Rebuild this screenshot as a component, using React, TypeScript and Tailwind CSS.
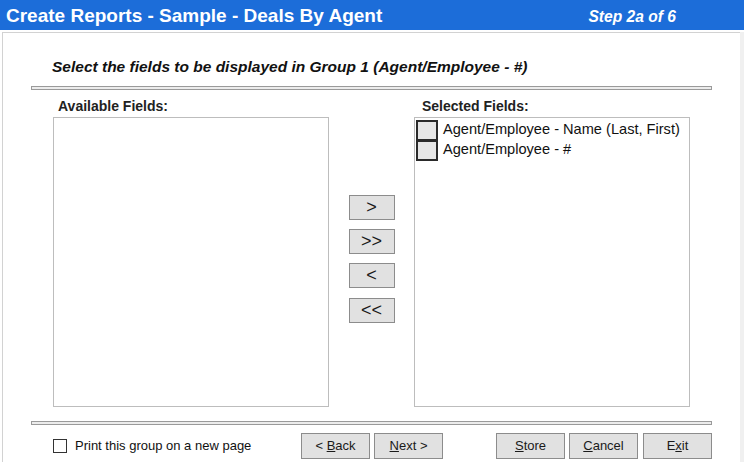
import React from "react";

const font = { fontFamily: '"Liberation Sans", Arial, sans-serif' };

function Btn({ children, className = "" }: { children: React.ReactNode; className?: string }) {
  return (
    <button
      className={`flex items-center justify-center border border-[#8c8c8c] bg-[#e1e1e1] text-[13px] text-[#1a1a1a] ${className}`}
    >
      {children}
    </button>
  );
}

function FieldRow({ label }: { label: string }) {
  return (
    <div className="flex h-[20px] items-center">
      <span className="h-[21px] w-[22px] shrink-0 border-2 border-[#2a2a2a] bg-[#e6e6e6] -mb-[1px]" />
      <span className="ml-[5px] text-[14.6px] text-[#111]">{label}</span>
    </div>
  );
}

export default function App() {
  return (
    <div className="flex h-[462px] w-[744px] flex-col overflow-hidden bg-white" style={font}>
      <div className="flex h-[30px] shrink-0 items-center justify-between bg-[#1c6dd9] pl-[6px] pr-[68px] pt-[3px] text-white">
        <span className="text-[19px] font-bold">Create Reports - Sample - Deals By Agent</span>
        <span className="text-[15.6px] font-bold italic">Step 2a of 6</span>
      </div>
      <div className="flex flex-1 pt-[2px]">
        <div className="ml-[2px] w-[738px] border-l border-t border-[#d2d2d2] bg-white">
          <div className="ml-[49px] mt-[24px] text-[15.5px] font-bold italic leading-[20px] text-[#111]">
            Select the fields to be displayed in Group 1 (Agent/Employee - #)
          </div>
          <div className="ml-[28px] mt-[9px] h-[4px] w-[681px] border border-[#9a9a9a] bg-[#ececec]" />
          <div className="ml-[50px] mt-[8px] flex">
            <div className="w-[276px]">
              <div className="pl-[5px] text-[14px] font-bold leading-[16px] text-[#222]">Available Fields:</div>
              <div className="mt-[3px] h-[290px] border border-[#bdbdbd] bg-white" />
            </div>
            <div className="flex w-[85px] flex-col items-center pt-[97px]">
              <div className="flex flex-col gap-[9px]">
                <Btn className="h-[25px] w-[46px] text-[18px]">&gt;</Btn>
                <Btn className="h-[25px] w-[46px] text-[18px]">&gt;&gt;</Btn>
                <Btn className="h-[25px] w-[46px] text-[18px]">&lt;</Btn>
                <Btn className="mt-[1px] h-[25px] w-[46px] text-[18px]">&lt;&lt;</Btn>
              </div>
            </div>
            <div className="w-[276px]">
              <div className="pl-[8px] text-[14px] font-bold leading-[16px] text-[#222]">Selected Fields:</div>
              <div className="mt-[3px] h-[290px] border border-[#bdbdbd] bg-white pl-[1px] pt-[2px]">
                <FieldRow label="Agent/Employee - Name (Last, First)" />
                <FieldRow label="Agent/Employee - #" />
              </div>
            </div>
          </div>
          <div className="ml-[28px] mt-[14px] h-[4px] w-[681px] border border-[#9a9a9a] bg-[#ececec]" />
          <div className="ml-[50px] mt-[8px] flex h-[26px] items-center">
            <span className="h-[14px] w-[14px] border border-[#333] bg-white" />
            <span className="ml-[8px] text-[13px] text-[#111]">Print this group on a new page</span>
            <div className="ml-auto mr-[28px] flex">
              <Btn className="h-[26px] w-[69px]">
                &lt;&nbsp;<u>B</u>ack
              </Btn>
              <Btn className="ml-[4px] h-[26px] w-[69px]">
                <u>N</u>ext &gt;
              </Btn>
              <Btn className="ml-[53px] h-[26px] w-[69px]">
                <u>S</u>tore
              </Btn>
              <Btn className="ml-[4px] h-[26px] w-[69px]">
                <u>C</u>ancel
              </Btn>
              <Btn className="ml-[5px] h-[26px] w-[69px]">
                E<u>x</u>it
              </Btn>
            </div>
          </div>
        </div>
        <div className="flex-1 bg-[#f0f0f0]" />
      </div>
    </div>
  );
}
